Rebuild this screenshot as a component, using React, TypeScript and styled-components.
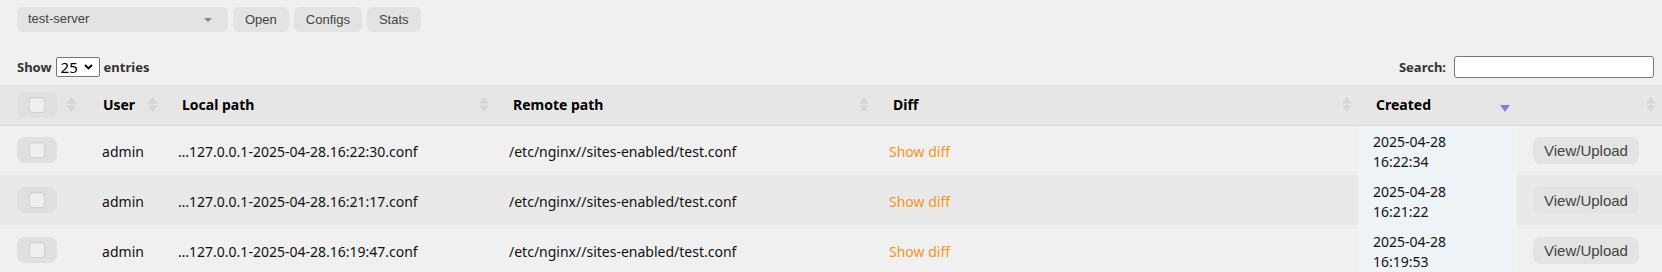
import React from 'react';
import styled, { createGlobalStyle } from 'styled-components';

const GlobalStyle = createGlobalStyle`
  html, body {
    margin: 0;
    padding: 0;
    background: #f0f0f0;
    overflow: hidden;
  }
  body {
    font-family: "Noto Sans", "Open Sans", Arial, sans-serif;
    color: #111;
  }
`;

const Page = styled.div`
  padding-top: 7px;
`;

const TopBar = styled.div`
  display: flex;
  gap: 5px;
  padding: 0 17px;
  height: 25px;
`;

const ServerSelect = styled.div`
  width: 211px;
  box-sizing: border-box;
  display: flex;
  align-items: center;
  justify-content: space-between;
  padding: 0 16px 3px 11px;
  background: #e3e3e3;
  border-radius: 6px;
  font-family: "Liberation Sans", Arial, sans-serif;
  font-size: 13px;
  color: #444;
`;

const Caret = styled.span`
  width: 0;
  height: 0;
  border-left: 4px solid transparent;
  border-right: 4px solid transparent;
  border-top: 4px solid #888;
  margin-top: 3px;
`;

const Button = styled.button<{ $wide?: boolean }>`
  border: none;
  background: #e3e3e3;
  border-radius: ${(p) => (p.$wide ? '8px' : '6px')};
  font-family: "Liberation Sans", Arial, sans-serif;
  font-size: ${(p) => (p.$wide ? '15px' : '13px')};
  color: #444;
  padding: ${(p) => (p.$wide ? '0 11px' : '0 12px')};
  height: ${(p) => (p.$wide ? '27px' : '25px')};
  cursor: pointer;
`;

const Controls = styled.div`
  display: flex;
  justify-content: space-between;
  align-items: center;
  margin-top: 24px;
  padding: 0 8px 0 17px;
  height: 22px;
  font-size: 13px;
  font-weight: 700;
  color: #333;
`;

const Label = styled.label`
  display: flex;
  align-items: center;
  gap: 4px;
`;

const SelectWrap = styled.span`
  position: relative;
  display: inline-flex;
`;

const LengthSelect = styled.select`
  appearance: none;
  width: 44px;
  height: 20px;
  box-sizing: border-box;
  border: 1px solid #767676;
  border-radius: 2px;
  background: #fff;
  font-family: "Noto Sans", Arial, sans-serif;
  font-size: 15px;
  line-height: 18px;
  padding: 0 0 0 4px;
  color: #000;
`;

const Chevron = styled.svg`
  position: absolute;
  right: 7px;
  top: 7px;
  pointer-events: none;
`;

const SearchInput = styled.input`
  width: 200px;
  height: 22px;
  box-sizing: border-box;
  border: 1px solid #767676;
  border-radius: 3px;
  background: #fff;
  margin-left: 4px;
`;

const Table = styled.table`
  width: 100%;
  margin-top: 7px;
  border-collapse: collapse;
  table-layout: fixed;
`;

const HeadCell = styled.th<{ $center?: boolean }>`
  position: relative;
  height: 40px;
  box-sizing: border-box;
  padding: ${(p) => (p.$center ? '0 18px 0 10px' : '0 18px')};
  background: #e6e6e6;
  border-bottom: 1px solid #d6d6d6;
  text-align: ${(p) => (p.$center ? 'center' : 'left')};
  font-size: 14px;
  font-weight: 700;
  color: #000;
`;

const SortMark = styled.svg<{ $sorted?: boolean }>`
  position: absolute;
  right: ${(p) => (p.$sorted ? '7px' : '6px')};
  top: ${(p) => (p.$sorted ? '20px' : '12px')};
`;

const Row = styled.tr<{ $shade?: boolean }>`
  background: ${(p) => (p.$shade ? '#e9e9e9' : '#f0f0f0')};
  & + & td {
    border-top: 1px solid #d9d9d9;
  }
`;

const Cell = styled.td<{ $center?: boolean; $sorted?: boolean }>`
  height: 50px;
  box-sizing: border-box;
  padding: 3px 14px 0;
  font-size: 14px;
  line-height: 20px;
  text-align: ${(p) => (p.$center ? 'center' : 'left')};
  background: ${(p) => (p.$sorted ? '#eef3f8' : 'transparent')};
  color: #111;
  white-space: nowrap;
  overflow: hidden;
`;

const DateCell = styled(Cell)`
  padding-left: 15px;
`;

const CheckPad = styled.span`
  display: flex;
  align-items: center;
  justify-content: center;
  width: 40px;
  height: 26px;
  border-radius: 8px;
  background: #e0e0e0;
`;

const CheckBox = styled.span`
  width: 16px;
  height: 16px;
  box-sizing: border-box;
  border: 1px solid #d0d0d0;
  border-radius: 3px;
  background: #efefef;
  box-shadow: inset 0 1px 1px rgba(0, 0, 0, 0.05);
`;

const DiffLink = styled.a`
  color: #f7931a;
  text-decoration: none;
  cursor: pointer;
`;

const HeadCheckCell = styled(HeadCell)`
  padding: 0 0 0 17px;
`;

const CheckCell = styled(Cell)`
  padding: 0 0 0 17px;
`;

const ActionCell = styled(Cell)`
  padding: 0 0 0 16px;
`;

const SortIcon: React.FC<{ sorted?: boolean }> = ({ sorted }) =>
  sorted ? (
    <SortMark $sorted width="10" height="8" viewBox="0 0 10 8">
      <path d="M0 0 H10 L5 7 Z" fill="#7f7fe0" />
    </SortMark>
  ) : (
    <SortMark width="10" height="15" viewBox="0 0 10 15">
      <path d="M5 0 L10 6.5 H0 Z" fill="#d6d6d6" />
      <path d="M0 8.5 H10 L5 15 Z" fill="#d6d6d6" />
    </SortMark>
  );

const rows = [
  { local: '…127.0.0.1-2025-04-28.16:22:30.conf', date: '2025-04-28', time: '16:22:34' },
  { local: '…127.0.0.1-2025-04-28.16:21:17.conf', date: '2025-04-28', time: '16:21:22' },
  { local: '…127.0.0.1-2025-04-28.16:19:47.conf', date: '2025-04-28', time: '16:19:53' },
];

export default function App() {
  return (
    <Page>
      <GlobalStyle />
      <TopBar>
        <ServerSelect>
          <span>test-server</span>
          <Caret />
        </ServerSelect>
        <Button>Open</Button>
        <Button>Configs</Button>
        <Button>Stats</Button>
      </TopBar>

      <Controls>
        <Label>
          Show
          <SelectWrap>
            <LengthSelect defaultValue="25">
              <option>10</option>
              <option>25</option>
              <option>50</option>
              <option>100</option>
            </LengthSelect>
            <Chevron width="9" height="6" viewBox="0 0 9 6">
              <path d="M1 1 L4.5 4.5 L8 1" stroke="#000" strokeWidth="1.8" fill="none" />
            </Chevron>
          </SelectWrap>
          entries
        </Label>
        <Label>
          Search:
          <SearchInput type="search" />
        </Label>
      </Controls>

      <Table>
        <colgroup>
          <col style={{ width: 82 }} />
          <col style={{ width: 82 }} />
          <col style={{ width: 331 }} />
          <col style={{ width: 380 }} />
          <col style={{ width: 483 }} />
          <col style={{ width: 159 }} />
          <col />
        </colgroup>
        <thead>
          <tr>
            <HeadCheckCell>
              <CheckPad>
                <CheckBox />
              </CheckPad>
              <SortIcon />
            </HeadCheckCell>
            <HeadCell $center>
              User
              <SortIcon />
            </HeadCell>
            <HeadCell>
              Local path
              <SortIcon />
            </HeadCell>
            <HeadCell>
              Remote path
              <SortIcon />
            </HeadCell>
            <HeadCell>
              Diff
              <SortIcon />
            </HeadCell>
            <HeadCell>
              Created
              <SortIcon sorted />
            </HeadCell>
            <HeadCell>
              <SortIcon />
            </HeadCell>
          </tr>
        </thead>
        <tbody>
          {rows.map((r, i) => (
            <Row key={r.time} $shade={i === 1}>
              <CheckCell>
                <CheckPad>
                  <CheckBox />
                </CheckPad>
              </CheckCell>
              <Cell $center>admin</Cell>
              <Cell>{r.local}</Cell>
              <Cell>/etc/nginx//sites-enabled/test.conf</Cell>
              <Cell>
                <DiffLink>Show diff</DiffLink>
              </Cell>
              <DateCell $sorted>
                {r.date}
                <br />
                {r.time}
              </DateCell>
              <ActionCell>
                <Button $wide>View/Upload</Button>
              </ActionCell>
            </Row>
          ))}
        </tbody>
      </Table>
    </Page>
  );
}
